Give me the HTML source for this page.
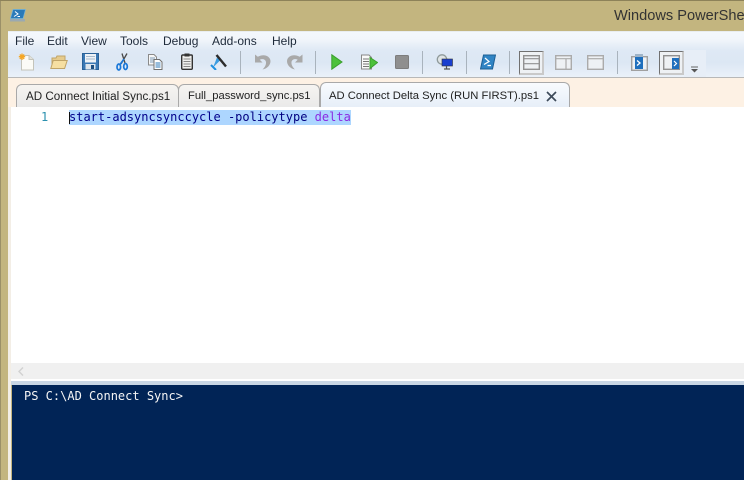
<!DOCTYPE html>
<html><head><meta charset="utf-8"><style>
html,body{margin:0;padding:0}
body{width:744px;height:480px;overflow:hidden;position:relative;background:#c3b57f;font-family:"Liberation Sans",sans-serif;color:#1e1e1e}
div,svg{position:absolute}
.t{white-space:nowrap;line-height:16px}
.menu{top:33px;font-size:12px;color:#1e2a3a}
.sep{top:51px;width:1px;height:23px;background:#a9b3bd}
.tab{box-sizing:border-box;border:1px solid #a9a9a9;border-bottom:0;border-radius:6px 6px 0 0;white-space:nowrap;color:#222}
.mono{font-family:"DejaVu Sans Mono",monospace;font-size:12px;white-space:nowrap;line-height:16px}
</style></head><body>
<div style="left:0;top:0;width:744px;height:1px;background:#8d8259"></div>
<div style="left:0;top:1px;width:1px;height:479px;background:#9b9068"></div>
<svg style="left:10px;top:9px" width="16" height="13" viewBox="0 0 16 13"><path d="M3 0.5H15.5L13 9.5H0.5Z" fill="#2a7ab8" stroke="#6fb3dd" stroke-width=".7"/><path d="M5 2.5L8 5L4 7.5M7.5 7.5H10" fill="none" stroke="#fff" stroke-width="1"/><rect x="0" y="10" width="15" height="2.5" fill="#9aa9b2"/></svg>
<div class="t" style="left:614px;top:7px;font-size:14.6px;line-height:18px;color:#333">Windows PowerShell ISE</div>

<div style="left:8px;top:31px;width:736px;height:47px;background:linear-gradient(#f4f8fc 0,#f2f6fb 8px,#dfe9f5 19px,#dce7f4 32px,#eaf1f9 46px)"></div>
<div style="left:8px;top:31px;width:736px;height:1px;background:#e9edf0"></div>
<div style="left:8px;top:77px;width:736px;height:1px;background:#b8b8b8"></div>
<div class="t menu" style="left:15px">File</div>
<div class="t menu" style="left:47px">Edit</div>
<div class="t menu" style="left:81px">View</div>
<div class="t menu" style="left:120px">Tools</div>
<div class="t menu" style="left:163px">Debug</div>
<div class="t menu" style="left:212px">Add-ons</div>
<div class="t menu" style="left:272px">Help</div>

<!-- new -->
<svg style="left:18px;top:53px" width="18" height="18"><path d="M3.5 2.5H11L15.5 6.5V17H3.5Z" fill="#fbfbf6" stroke="#c4c4ba"/><path d="M11 2.5V6.5H15.5" fill="#e2e2dc" stroke="#c4c4ba"/><path d="M4 .5V7M.8 3.7H7.2M1.8 1.5L6.2 5.9M6.2 1.5L1.8 5.9" stroke="#f5a623" stroke-width="1.3"/></svg>
<!-- open -->
<svg style="left:50px;top:54px" width="18" height="16"><path d="M2 14V4H6L7 2H15V6" fill="#e6cb8c" stroke="#c0a468"/><path d="M.8 14.5L3.2 6.5H17.2L14.6 14.5Z" fill="#f6dfa2" stroke="#c0a468"/></svg>
<!-- save -->
<svg style="left:82px;top:53px" width="17" height="17"><rect x=".5" y=".5" width="16" height="16" fill="#3a78b4" stroke="#2a6298"/><rect x="3" y="1" width="11" height="8.5" fill="#eef2f6"/><path d="M4 3.5H13M4 6H13" stroke="#a8bccf"/><rect x="3.5" y="11" width="10" height="5.5" fill="#dfe6ec"/><rect x="9" y="12" width="3" height="4" fill="#1e4f80"/></svg>
<!-- cut -->
<svg style="left:116px;top:53px" width="13" height="18"><path d="M11 .5L5 11M6 .5L9 10" stroke="#4a4a4a" stroke-width="1.3" fill="none"/><ellipse cx="2.8" cy="14" rx="1.8" ry="3" fill="none" stroke="#1b78d8" stroke-width="1.7"/><ellipse cx="9.5" cy="13.5" rx="1.8" ry="3" fill="none" stroke="#1b78d8" stroke-width="1.7"/><path d="M8 6L4 11.5" stroke="#1b78d8" stroke-width="1.6"/></svg>
<!-- copy -->
<svg style="left:148px;top:54px" width="15" height="16"><path d="M.5 .5H6L8.5 3V11H.5Z" fill="#f7f7f7" stroke="#8a8a8a"/><path d="M2 4H7M2 6H7M2 8H7" stroke="#7f9cb8"/><path d="M6 5.5H11.5L14 8V15.5H6Z" fill="#fff" stroke="#707070"/><path d="M7.5 9H12.5M7.5 11H12.5M7.5 13H12.5" stroke="#2e78b8"/></svg>
<!-- paste -->
<svg style="left:181px;top:53px" width="12" height="17"><rect x=".7" y="2" width="10.6" height="14.3" rx="1" fill="#f0f0ee" stroke="#333" stroke-width="1.4"/><rect x="3.5" y=".5" width="5" height="3" fill="#333"/><path d="M2.5 6H9.5M2.5 8.5H9.5M2.5 11H9.5M2.5 13.5H9.5" stroke="#888"/></svg>
<!-- clear -->
<svg style="left:210px;top:53px" width="17" height="17"><path d="M3 14.5L10 7.5L7 4.5Z" fill="#3a9ce0"/><path d="M1 12L6 17" stroke="#1e90e0" stroke-width="2"/><path d="M6.5 2L16 13.5" stroke="#2c2c2c" stroke-width="2.4"/></svg>
<div class="sep" style="left:240px"></div>
<!-- undo -->
<svg style="left:254px;top:53px" width="17" height="17"><path d="M1 1.5V9.5H8.5L5.8 6.8C8 5.4 11.5 6 12 9C12.3 11.5 11 14 8.5 16.5C13.5 15.5 16.5 12 16.5 8C16 2.8 9.6 .6 3.8 3.8Z" fill="#a9a9a9"/></svg>
<!-- redo -->
<svg style="left:286px;top:53px" width="17" height="17"><path d="M16.5 1.5V9.5H9L11.7 6.8C9.5 5.4 6 6 5.5 9C5.2 11.5 6.5 14 9 16.5C4 15.5 1 12 1 8C1.5 2.8 7.9 .6 13.7 3.8Z" fill="#a9a9a9"/></svg>
<div class="sep" style="left:315px"></div>
<!-- run -->
<svg style="left:331px;top:54px" width="12" height="16"><path d="M.8 .8L11 8L.8 15.2Z" fill="#4cc13a" stroke="#3a9f2c"/></svg>
<!-- run selection -->
<svg style="left:361px;top:54px" width="17" height="16"><path d="M.5 1H8L10.5 3.5V15H.5Z" fill="#fafafa" stroke="#888"/><path d="M2 5H8M2 7.5H8M2 10H8M2 12.5H8" stroke="#777"/><path d="M9 3.5L16.5 8.5L9 14.5Z" fill="#4cc13a" stroke="#3a9f2c"/></svg>
<!-- stop -->
<svg style="left:395px;top:55px" width="14" height="14"><rect x=".5" y=".5" width="13" height="13" rx="1" fill="#8f8f8f" stroke="#7d7d7d"/></svg>
<div class="sep" style="left:422px"></div>
<!-- remote -->
<svg style="left:436px;top:54px" width="17" height="16"><circle cx="6" cy="5.5" r="4.7" fill="#dfe4e6" stroke="#8f9a9a" stroke-width="1.3"/><rect x="6" y="5" width="10.5" height="7" fill="#1a3fd0" stroke="#333" stroke-width=".6"/><path d="M10.5 12V14.5M8 15H14" stroke="#555" stroke-width="1.2"/></svg>
<div class="sep" style="left:466px"></div>
<!-- ps -->
<svg style="left:480px;top:54px" width="16" height="16"><path d="M3.5 1H15.5L12.5 15H.5Z" fill="#3084c4" stroke="#1c5f95"/><path d="M5 4L9 7.5L4 10.5M7.5 11.5H11" fill="none" stroke="#fff" stroke-width="1.2"/></svg>
<div class="sep" style="left:509px"></div>
<!-- layout buttons -->
<div style="left:519px;top:51px;box-sizing:border-box;width:25px;height:24px;border:1px solid #707070;border-bottom:2px solid #c9c9c9;border-right:2px solid #c9c9c9;background:#eef1f4"></div>
<svg style="left:523px;top:55px" width="17" height="15"><rect x=".7" y=".7" width="15.6" height="13.6" fill="#eef1f4" stroke="#919191" stroke-width="1.4"/><path d="M1 3.7H16M1 8.7H16" stroke="#919191" stroke-width="1.2"/></svg>
<svg style="left:555px;top:55px" width="17" height="15"><rect x=".7" y=".7" width="15.6" height="13.6" fill="#eef1f4" stroke="#ababab" stroke-width="1.4"/><path d="M1 3.7H16M11 3.7V14" stroke="#ababab" stroke-width="1.2"/></svg>
<svg style="left:587px;top:55px" width="17" height="15"><rect x=".7" y=".7" width="15.6" height="13.6" fill="#eef1f4" stroke="#ababab" stroke-width="1.4"/><path d="M1 3.7H16" stroke="#ababab" stroke-width="1.2"/></svg>
<div class="sep" style="left:617px"></div>
<svg style="left:631px;top:53px" width="17" height="18"><rect x=".7" y="3.7" width="15.6" height="13.6" fill="#eef1f4" stroke="#a0a0a0" stroke-width="1.4"/><rect x="4" y="1" width="8" height="3" fill="#9fb4c8"/><rect x="4" y="4" width="8" height="12" fill="#1f6fbd"/><path d="M6 7.5L9 10L6 12.5" fill="none" stroke="#fff" stroke-width="1.3"/></svg>
<div style="left:659px;top:51px;box-sizing:border-box;width:25px;height:24px;border:1px solid #707070;border-bottom:2px solid #c9c9c9;border-right:2px solid #c9c9c9;background:#eef1f4"></div>
<svg style="left:663px;top:55px" width="17" height="15"><rect x=".7" y=".7" width="15.6" height="13.6" fill="#eef1f4" stroke="#919191" stroke-width="1.4"/><rect x="9" y="3" width="7" height="11" fill="#1f6fbd"/><path d="M11 6L13.5 8.5L11 11" fill="none" stroke="#fff" stroke-width="1.2"/></svg>
<div style="left:684px;top:50px;width:22px;height:27px;background:#e7eef7"></div>
<svg style="left:690px;top:66px" width="10" height="7"><path d="M1 1H8" stroke="#666"/><path d="M1 3H8L4.5 6.5Z" fill="#555"/></svg>

<!-- tab strip -->
<div style="left:8px;top:78px;width:736px;height:29px;background:#fdf1e4"></div>
<div class="tab" style="left:16px;top:84px;width:163px;height:24px;padding:4px 0 0 9px;font-size:11.65px;line-height:15px;background:linear-gradient(#f6f4f1,#e9e9e9)">AD Connect Initial Sync.ps1</div>
<div class="tab" style="left:178px;top:84px;width:142px;height:24px;padding:4px 0 0 9px;font-size:11.2px;line-height:15px;background:linear-gradient(#f6f4f1,#e9e9e9)">Full_password_sync.ps1</div>
<div class="tab" style="left:320px;top:82px;width:250px;height:26px;padding:6px 0 0 8px;font-size:11.25px;line-height:15px;background:linear-gradient(#f8fbfe,#e6eef8)">AD Connect Delta Sync (RUN FIRST).ps1</div>
<svg style="left:546px;top:91px" width="11" height="11"><path d="M1 1L10 10M10 1L1 10" stroke="#3d4a5a" stroke-width="1.7"/></svg>

<!-- left gutter -->
<div style="left:8px;top:107px;width:3px;height:373px;background:#f3eee6"></div>
<!-- editor -->
<div style="left:11px;top:107px;width:733px;height:256px;background:#fff"></div>
<div style="left:69px;top:110px;width:282px;height:15px;background:#add6ff"></div>
<div style="left:69px;top:112px;width:1px;height:12px;background:#111"></div>
<div class="mono" style="left:41px;top:109px;color:#2b91af">1</div>
<div class="mono" style="left:69px;top:109px;color:#00008b">start-adsyncsynccycle <span style="color:#000080">-policytype</span> <span style="color:#8a2be2">delta</span></div>
<!-- scrollbar -->
<div style="left:11px;top:363px;width:733px;height:16px;background:#f0f0f0"></div>
<svg style="left:18px;top:367px" width="6" height="9"><path d="M5 .5L1 4.5L5 8.5" fill="none" stroke="#d2d2d2" stroke-width="1.5"/></svg>
<!-- splitter -->
<div style="left:11px;top:379px;width:733px;height:2px;background:#fff"></div>
<div style="left:11px;top:381px;width:733px;height:4px;background:#c9d6e4"></div>
<!-- console -->
<div style="left:12px;top:385px;width:732px;height:95px;background:#012456"></div>
<div class="mono" style="left:24px;top:388px;color:#f5f5f5">PS C:\AD Connect Sync&gt;</div>
</body></html>
